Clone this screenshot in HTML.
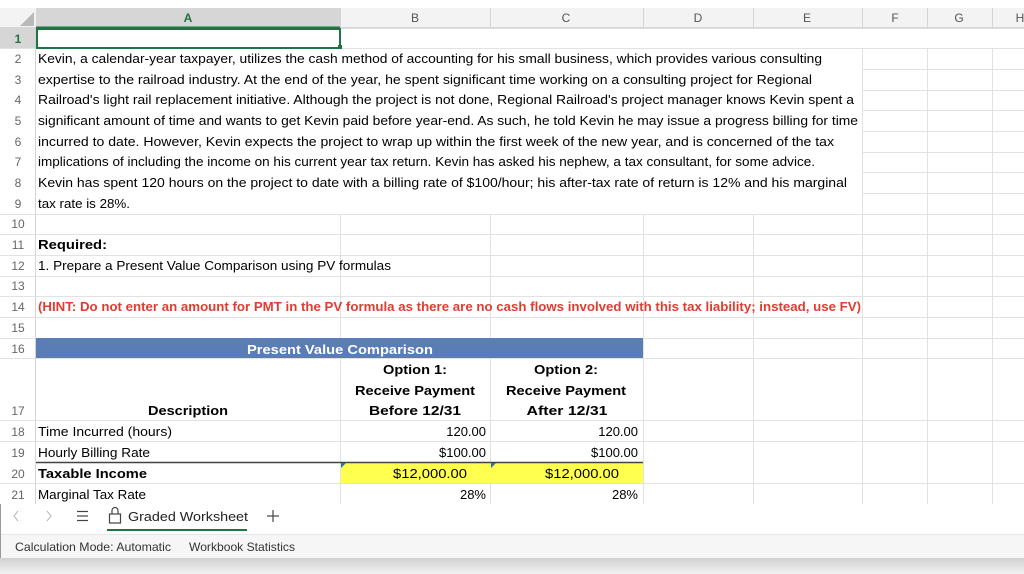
<!DOCTYPE html>
<html><head><meta charset="utf-8"><style>
html,body{margin:0;padding:0;width:1024px;height:574px;overflow:hidden;background:#fff}
svg{display:block}
text{font-family:"Liberation Sans",sans-serif}
</style></head><body>
<svg width="1024" height="574" viewBox="0 0 1024 574" xmlns="http://www.w3.org/2000/svg">
<rect width="1024" height="574" fill="#fff"/>
<rect x="0" y="8" width="1024" height="20" fill="#f3f3f3"/>
<polygon points="20,26 34,26 34,12" fill="#b9b9b9"/>
<rect x="36" y="8" width="304" height="20" fill="#d6d6d6"/>
<line x1="0" y1="28" x2="1024" y2="28" stroke="#b8b8b8"/>
<rect x="36" y="26.5" width="304" height="2" fill="#217346"/>
<g stroke="#d4d4d4">
<line x1="340.5" y1="8" x2="340.5" y2="28"/><line x1="490.5" y1="8" x2="490.5" y2="28"/>
<line x1="643.5" y1="8" x2="643.5" y2="28"/><line x1="753.5" y1="8" x2="753.5" y2="28"/>
<line x1="862.5" y1="8" x2="862.5" y2="28"/><line x1="927.5" y1="8" x2="927.5" y2="28"/>
<line x1="992.5" y1="8" x2="992.5" y2="28"/>
</g>
<g font-size="12" fill="#555" text-anchor="middle">
<text x="188" y="22" fill="#217346" font-weight="bold">A</text>
<text x="415" y="22">B</text><text x="566" y="22">C</text><text x="698" y="22">D</text>
<text x="807" y="22">E</text><text x="895" y="22">F</text><text x="959" y="22">G</text><text x="1020" y="22">H</text>
</g>
<rect x="0" y="28" width="36" height="20" fill="#d6d6d6"/>
<line x1="35.5" y1="28" x2="35.5" y2="504" stroke="#d4d4d4"/>
<g stroke="#e2e2e2">
<line x1="0" y1="48.5" x2="1024" y2="48.5"/>
<line x1="863" y1="69.5" x2="1024" y2="69.5"/><line x1="863" y1="90.5" x2="1024" y2="90.5"/>
<line x1="863" y1="110.5" x2="1024" y2="110.5"/><line x1="863" y1="131.5" x2="1024" y2="131.5"/>
<line x1="863" y1="152.5" x2="1024" y2="152.5"/><line x1="863" y1="172.5" x2="1024" y2="172.5"/>
<line x1="863" y1="193.5" x2="1024" y2="193.5"/>
<line x1="0" y1="214.5" x2="1024" y2="214.5"/><line x1="0" y1="234.5" x2="1024" y2="234.5"/>
<line x1="0" y1="255.5" x2="1024" y2="255.5"/><line x1="0" y1="276.5" x2="1024" y2="276.5"/>
<line x1="0" y1="296.5" x2="1024" y2="296.5"/><line x1="0" y1="317.5" x2="1024" y2="317.5"/>
<line x1="0" y1="338.5" x2="1024" y2="338.5"/><line x1="0" y1="358.5" x2="1024" y2="358.5"/>
<line x1="0" y1="420.5" x2="1024" y2="420.5"/><line x1="0" y1="441.5" x2="1024" y2="441.5"/>
<line x1="0" y1="483.5" x2="1024" y2="483.5"/>
<line x1="862.5" y1="48" x2="862.5" y2="504"/><line x1="927.5" y1="48" x2="927.5" y2="504"/>
<line x1="992.5" y1="48" x2="992.5" y2="504"/>
<line x1="340.5" y1="214" x2="340.5" y2="504"/><line x1="490.5" y1="214" x2="490.5" y2="504"/>
<line x1="643.5" y1="214" x2="643.5" y2="504"/><line x1="753.5" y1="214" x2="753.5" y2="504"/>
</g>
<rect x="37" y="29" width="303" height="19" fill="none" stroke="#217346" stroke-width="2"/>
<rect x="338" y="45" width="4" height="4" fill="#217346"/>
<g font-size="12" fill="#666" text-anchor="middle">
<text x="18" y="43" fill="#217346" font-weight="bold">1</text>
<text x="18" y="63">2</text><text x="18" y="84">3</text><text x="18" y="104">4</text>
<text x="18" y="125">5</text><text x="18" y="146">6</text><text x="18" y="166">7</text>
<text x="18" y="187">8</text><text x="18" y="208">9</text><text x="18" y="228">10</text>
<text x="18" y="249">11</text><text x="18" y="270">12</text><text x="18" y="290">13</text>
<text x="18" y="311">14</text><text x="18" y="332">15</text><text x="18" y="353">16</text>
<text x="18" y="415">17</text><text x="18" y="436">18</text><text x="18" y="457">19</text>
<text x="18" y="478">20</text><text x="18" y="499">21</text>
</g>
<g font-size="13" fill="#000">
<text x="38" y="63" textLength="784" lengthAdjust="spacingAndGlyphs">Kevin, a calendar-year taxpayer, utilizes the cash method of accounting for his small business, which provides various consulting</text>
<text x="38" y="84" textLength="774" lengthAdjust="spacingAndGlyphs">expertise to the railroad industry. At the end of the year, he spent significant time working on a consulting project for Regional</text>
<text x="38" y="104" textLength="816" lengthAdjust="spacingAndGlyphs">Railroad's light rail replacement initiative. Although the project is not done, Regional Railroad's project manager knows Kevin spent a</text>
<text x="38" y="125" textLength="820" lengthAdjust="spacingAndGlyphs">significant amount of time and wants to get Kevin paid before year-end. As such, he told Kevin he may issue a progress billing for time</text>
<text x="38" y="146" textLength="796" lengthAdjust="spacingAndGlyphs">incurred to date. However, Kevin expects the project to wrap up within the first week of the new year, and is concerned of the tax</text>
<text x="38" y="166" textLength="777" lengthAdjust="spacingAndGlyphs">implications of including the income on his current year tax return. Kevin has asked his nephew, a tax consultant, for some advice.</text>
<text x="38" y="187" textLength="809" lengthAdjust="spacingAndGlyphs">Kevin has spent 120 hours on the project to date with a billing rate of $100/hour; his after-tax rate of return is 12% and his marginal</text>
<text x="38" y="208" textLength="92" lengthAdjust="spacingAndGlyphs">tax rate is 28%.</text>
<text x="38" y="249" textLength="69" lengthAdjust="spacingAndGlyphs" font-weight="bold">Required:</text>
<text x="38" y="270" textLength="353" lengthAdjust="spacingAndGlyphs">1. Prepare a Present Value Comparison using PV formulas</text>
<text x="38" y="311" textLength="823" lengthAdjust="spacingAndGlyphs" font-weight="bold" fill="#e03c31">(HINT: Do not enter an amount for PMT in the PV formula as there are no cash flows involved with this tax liability; instead, use FV)</text>
</g>
<rect x="36" y="338" width="607" height="20" fill="#5a7db5"/>
<text x="340" y="354" font-size="13" font-weight="bold" fill="#fff" text-anchor="middle" textLength="186" lengthAdjust="spacingAndGlyphs">Present Value Comparison</text>
<rect x="36" y="359" width="607" height="61" fill="#fff"/>
<line x1="340.5" y1="359" x2="340.5" y2="504" stroke="#e2e2e2"/><line x1="490.5" y1="359" x2="490.5" y2="504" stroke="#e2e2e2"/>
<g font-size="13" font-weight="bold" fill="#000" text-anchor="middle">
<text x="188" y="415" textLength="80" lengthAdjust="spacingAndGlyphs">Description</text>
<text x="415" y="374" textLength="64" lengthAdjust="spacingAndGlyphs">Option 1:</text>
<text x="415" y="395" textLength="120" lengthAdjust="spacingAndGlyphs">Receive Payment</text>
<text x="415" y="415" textLength="92" lengthAdjust="spacingAndGlyphs">Before 12/31</text>
<text x="566" y="374" textLength="64" lengthAdjust="spacingAndGlyphs">Option 2:</text>
<text x="566" y="395" textLength="120" lengthAdjust="spacingAndGlyphs">Receive Payment</text>
<text x="567" y="415" textLength="81" lengthAdjust="spacingAndGlyphs">After 12/31</text>
</g>
<rect x="341" y="463" width="302" height="20" fill="#ffff4f"/>
<line x1="36" y1="462.5" x2="643" y2="462.5" stroke="#444" stroke-width="1.5"/>
<polygon points="341,463 346,463 341,468" fill="#2e6fa8"/>
<polygon points="491,463 496,463 491,468" fill="#2e6fa8"/>
<g font-size="13" fill="#000">
<text x="38" y="436" textLength="134" lengthAdjust="spacingAndGlyphs">Time Incurred (hours)</text>
<text x="38" y="457" textLength="112" lengthAdjust="spacingAndGlyphs">Hourly Billing Rate</text>
<text x="38" y="478" textLength="109" lengthAdjust="spacingAndGlyphs" font-weight="bold">Taxable Income</text>
<text x="38" y="499" textLength="108" lengthAdjust="spacingAndGlyphs">Marginal Tax Rate</text>
<text x="486" y="436" text-anchor="end">120.00</text>
<text x="638" y="436" text-anchor="end">120.00</text>
<text x="486" y="457" text-anchor="end">$100.00</text>
<text x="638" y="457" text-anchor="end">$100.00</text>
<text x="430" y="478" text-anchor="middle" textLength="74" lengthAdjust="spacingAndGlyphs">$12,000.00</text>
<text x="582" y="478" text-anchor="middle" textLength="74" lengthAdjust="spacingAndGlyphs">$12,000.00</text>
<text x="486" y="499" text-anchor="end">28%</text>
<text x="638" y="499" text-anchor="end">28%</text>
</g>
<rect x="0" y="504" width="1024" height="31" fill="#fff"/>
<g fill="none" stroke="#bbb" stroke-width="1.1">
<polyline points="18,511 14,516 18,521"/><polyline points="47,511 51,516 47,521"/>
</g>
<g stroke="#444" stroke-width="1.2">
<line x1="77" y1="511.5" x2="88" y2="511.5"/><line x1="77" y1="516" x2="88" y2="516"/><line x1="77" y1="520.5" x2="88" y2="520.5"/>
</g>
<g fill="none" stroke="#444" stroke-width="1.2">
<rect x="109.5" y="514" width="11" height="9"/>
<path d="M112,514 V510.5 a3,3 0 0 1 6,0 V514"/>
</g>
<text x="128" y="521" font-size="13" fill="#222" textLength="120" lengthAdjust="spacingAndGlyphs">Graded Worksheet</text>
<rect x="107" y="529" width="140" height="2" fill="#217346"/>
<g stroke="#444" stroke-width="1.2"><line x1="267" y1="516" x2="279" y2="516"/><line x1="273" y1="510" x2="273" y2="522"/></g>
<rect x="0" y="534" width="1024" height="24" fill="#f6f6f6"/>
<line x1="0" y1="534.5" x2="1024" y2="534.5" stroke="#e6e6e6"/>
<text x="15" y="551" font-size="12" fill="#333" textLength="156" lengthAdjust="spacingAndGlyphs">Calculation Mode: Automatic</text>
<text x="189" y="551" font-size="12" fill="#333" textLength="106" lengthAdjust="spacingAndGlyphs">Workbook Statistics</text>
<defs><linearGradient id="g" x1="0" y1="0" x2="0" y2="1"><stop offset="0" stop-color="#d0d0d0"/><stop offset="1" stop-color="#f2f2f2"/></linearGradient></defs>
<rect x="0" y="558" width="1024" height="16" fill="url(#g)"/>
<rect x="0" y="504" width="1" height="54" fill="#999"/>
</svg>
</body></html>
